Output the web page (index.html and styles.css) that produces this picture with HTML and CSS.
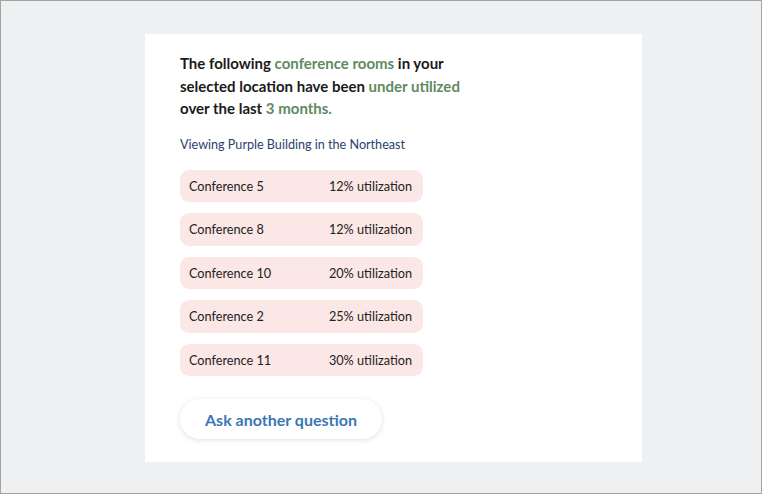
FILE: index.html
```html
<!DOCTYPE html>
<html>
<head>
<meta charset="utf-8">
<link rel="stylesheet" href="styles.css">
</head>
<body>
<div class="frame">
  <div class="card">
    <p class="headline">The following <span class="hl">conference rooms</span> in your<br>selected location have been <span class="hl">under utilized</span><br>over the last <span class="hl">3 months.</span></p>
    <p class="viewing">Viewing Purple Building in the Northeast</p>
    <ul class="rooms">
      <li class="room"><span>Conference 5</span><span>12% utilization</span></li>
      <li class="room"><span>Conference 8</span><span>12% utilization</span></li>
      <li class="room"><span>Conference 10</span><span>20% utilization</span></li>
      <li class="room"><span>Conference 2</span><span>25% utilization</span></li>
      <li class="room"><span>Conference 11</span><span>30% utilization</span></li>
    </ul>
    <button class="ask">Ask another question</button>
  </div>
</div>
</body>
</html>
```
FILE: styles.css
```css
* { box-sizing: border-box; }
html, body { margin: 0; padding: 0; }
body { font-family: "Lato", "Noto Sans", sans-serif; }
.frame {
  width: 762px;
  height: 494px;
  border: 1px solid #a3a3a3;
  background: #eff0f2;
  padding: 33px 0 0 144px;
}
.card {
  width: 497px;
  height: 428px;
  background: #fff;
  padding: 18px 35px 0 35px;
}
.headline {
  margin: 0;
  font-size: 15px;
  font-weight: 700;
  line-height: 22.5px;
  color: #1a1a1a;
}
.hl { color: #5f8a5f; }
.viewing {
  margin: 17px 0 0 0;
  font-size: 12.6px;
  color: #2b3f6e;
  line-height: 16px;
}
.rooms {
  list-style: none;
  margin: 17px 0 0 0;
  padding: 0;
  width: 243px;
  display: flex;
  flex-direction: column;
  gap: 11px;
}
.room {
  height: 32.5px;
  border-radius: 9px;
  background: #fbe7e6;
  display: flex;
  justify-content: space-between;
  align-items: center;
  padding: 0 11px 0 9px;
  font-size: 12.7px;
  color: #222;
}
.ask {
  margin-top: 23px;
  width: 202px;
  height: 40px;
  border: none;
  border-radius: 20px;
  background: #fff;
  box-shadow: 0 1px 5px rgba(60, 80, 110, 0.18);
  font-family: "Lato", sans-serif;
  font-weight: 700;
  font-size: 16px;
  color: #3b77b3;
  padding: 0;
}
```
